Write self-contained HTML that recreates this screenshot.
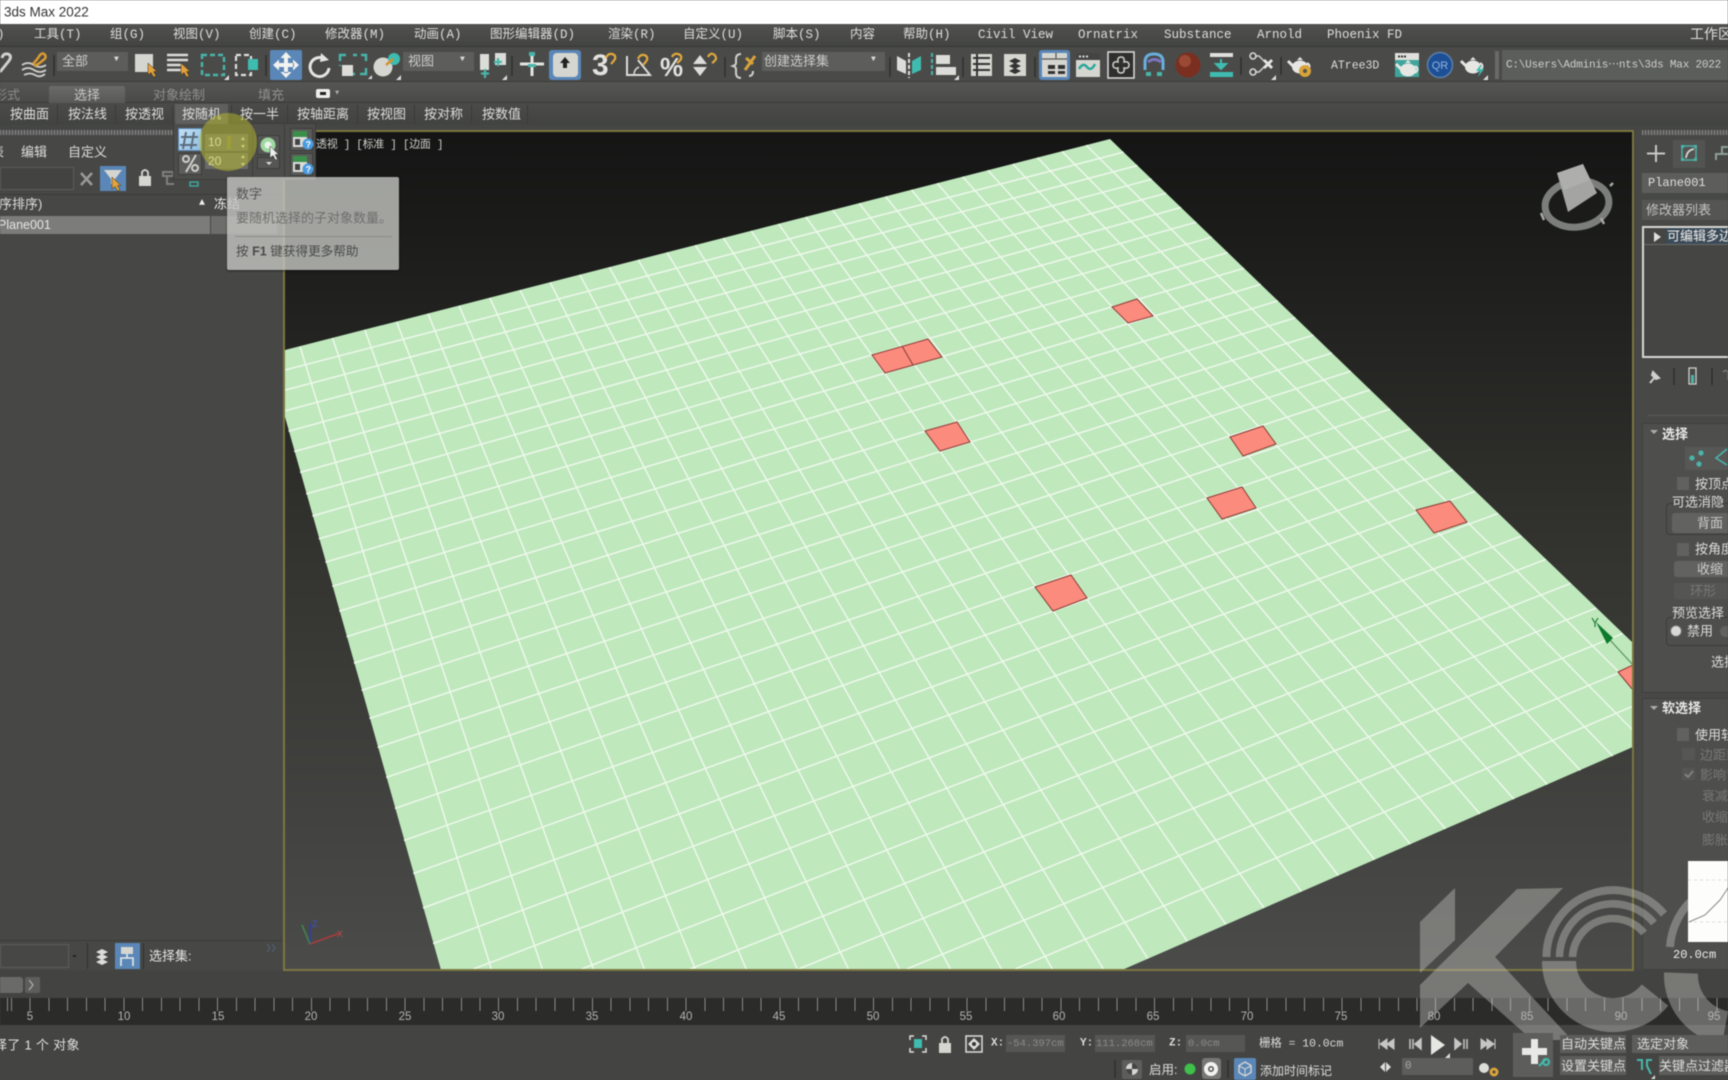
<!DOCTYPE html>
<html lang="zh-CN"><head><meta charset="utf-8"><title>3ds Max 2022</title>
<style>
*{box-sizing:border-box;margin:0;padding:0}
html,body{width:1728px;height:1080px;overflow:hidden;background:#454644}
#root{position:relative;width:1728px;height:1080px;overflow:hidden;filter:blur(.55px);font-family:"Liberation Mono","Noto Sans CJK SC",monospace;font-size:12.5px;color:#ddd}
.b{position:absolute}
.t{position:absolute;white-space:nowrap;transform:translateY(-50%);line-height:1}
.c{font-family:"Liberation Sans","Noto Sans CJK SC",sans-serif;font-size:13px}
.d{color:#777}
.dd{position:absolute;background:#5d5e5b}
.tick{position:absolute;white-space:nowrap;top:1017px;transform:translate(-50%,-50%);font:11.5px "Liberation Sans",sans-serif;color:#b4b5b1}
svg{position:absolute;left:0;top:0;overflow:hidden}
</style></head><body><div id="root">

<!-- chrome backgrounds -->
<div class="b" style="left:0;top:0;width:1728px;height:24px;background:#fff"></div>
<div class="b" style="left:0;top:24px;width:1728px;height:23px;background:linear-gradient(#515250,#434442);border-bottom:1px solid #383937"></div>
<div class="b" style="left:0;top:47px;width:1728px;height:35px;background:#4a4b49;border-bottom:1px solid #3b3c3a"></div>
<div class="b" style="left:0;top:82px;width:1728px;height:21px;background:linear-gradient(#555654,#4a4b49);border-bottom:1px solid #3b3c3a"></div>
<div class="b" style="left:0;top:103px;width:1728px;height:22px;background:linear-gradient(#4b4c4a,#424341)"></div>
<div class="b" style="left:0;top:125px;width:1728px;height:5px;background:#454644"></div>
<!-- left panel -->
<div class="b" style="left:0;top:130px;width:283px;height:840px;background:#474846"></div>
<div class="b" style="left:0;top:130px;width:173px;height:5px;background:repeating-linear-gradient(90deg,#888 0 1px,#555 1px 3px)"></div>
<div class="b" style="left:0;top:167px;width:74px;height:23px;border:1px solid #5b5c5a;background:#434442"></div>
<div class="b" style="left:100px;top:166px;width:26px;height:25px;background:#5a87b8"></div>
<div class="b" style="left:0;top:194px;width:283px;height:1px;background:#3a3b39"></div>
<div class="b" style="left:0;top:216px;width:210px;height:18px;background:#7c7d7a"></div>
<div class="b" style="left:211px;top:216px;width:66px;height:18px;background:#6d6e6b"></div>
<div class="b" style="left:0;top:940px;width:283px;height:1px;background:#3a3b39"></div>
<div class="b" style="left:0;top:944px;width:69px;height:24px;border:1px solid #5b5c5a"></div>
<div class="b" style="left:115px;top:943px;width:25px;height:26px;background:#5a87b8"></div>
<div class="b" style="left:87px;top:943px;width:1px;height:26px;background:#2f302e"></div>
<div class="b" style="left:143px;top:943px;width:1px;height:26px;background:#2f302e"></div>
<!-- bottom -->
<div class="b" style="left:0;top:970px;width:1728px;height:28px;background:#434442"></div>
<div class="b" style="left:0;top:977px;width:23px;height:16px;background:#6a6b68;border-radius:0 3px 3px 0"></div>
<div class="b" style="left:25px;top:977px;width:15px;height:16px;background:#5d5e5b;border-radius:2px"></div>
<div class="b" style="left:0;top:998px;width:1728px;height:27px;background:#2b2c2a"></div>
<div class="b" style="left:0;top:998px;width:1728px;height:13px;background:repeating-linear-gradient(90deg,#8a8b88 0 1px,transparent 1px 18.74px);background-position:11px 0"></div>
<div class="b" style="left:0;top:1025px;width:1728px;height:55px;background:#444543"></div>
<!-- right panel -->
<div class="b" style="left:1636px;top:130px;width:92px;height:840px;background:#484947"></div>
<div class="b" style="left:1642px;top:130px;width:86px;height:5px;background:repeating-linear-gradient(90deg,#888 0 1px,#555 1px 3px)"></div>
<div class="b" style="left:1673px;top:140px;width:32px;height:28px;background:#535452"></div>
<div class="dd" style="left:1642px;top:173px;width:86px;height:20px"></div>
<div class="dd" style="left:1642px;top:200px;width:86px;height:20px;background:#555654"></div>
<div class="b" style="left:1642px;top:226px;width:86px;height:132px;border:2px solid #d8d8d4;border-right:0;background:#454644"></div>
<div class="b" style="left:1644px;top:244px;width:84px;height:1px;background:#6a6b68"></div>
<div class="b" style="left:1666px;top:228px;width:62px;height:16px;background:#3b4a58"></div>
<div class="b" style="left:1648px;top:415px;width:80px;height:1px;background:#5b5c5a"></div>
<div class="b" style="left:1642px;top:423px;width:86px;height:270px;background:#4e4f4d;border:1px solid #3f403e;border-right:0"></div>
<div class="b" style="left:1685px;top:447px;width:43px;height:23px;background:#575856"></div>
<div class="b" style="left:1677px;top:477px;width:12px;height:13px;background:#616260"></div>
<div class="b" style="left:1666px;top:503px;width:62px;height:32px;border:1px solid #3c3d3b;border-right:0;border-radius:4px 0 0 4px"></div>
<div class="b" style="left:1672px;top:513px;width:56px;height:20px;background:#626361;border-radius:3px 0 0 3px"></div>
<div class="b" style="left:1677px;top:543px;width:12px;height:13px;background:#616260"></div>
<div class="b" style="left:1674px;top:561px;width:54px;height:16px;background:#626361;border-radius:3px 0 0 3px"></div>
<div class="b" style="left:1674px;top:583px;width:54px;height:16px;background:#555654;border-radius:3px 0 0 3px"></div>
<div class="b" style="left:1666px;top:617px;width:62px;height:29px;border:1px solid #3c3d3b;border-right:0;border-radius:4px 0 0 4px"></div>
<div class="b" style="left:1720px;top:626px;width:8px;height:11px;background:#626361;border-radius:6px 0 0 6px"></div>
<div class="b" style="left:1642px;top:698px;width:86px;height:272px;background:#4e4f4d;border:1px solid #3f403e;border-right:0"></div>
<div class="b" style="left:1677px;top:728px;width:12px;height:13px;background:#616260"></div>
<div class="b" style="left:1682px;top:748px;width:13px;height:12px;background:#565755"></div>
<div class="b" style="left:1682px;top:768px;width:13px;height:12px;background:#565755"></div>

<!-- viewport -->
<svg width="1728" height="1080" viewBox="0 0 1728 1080">
<defs><linearGradient id="vg" x1="0" y1="0" x2="0" y2="1"><stop offset="0" stop-color="#141514"/><stop offset=".5" stop-color="#33342f"/><stop offset="1" stop-color="#4b4c4a"/></linearGradient>
<clipPath id="vc"><rect x="285" y="132" width="1347" height="837"/></clipPath></defs>
<rect x="284" y="131" width="1349" height="839" fill="url(#vg)" stroke="#7d7640" stroke-width="2"/>
<g clip-path="url(#vc)">
<polygon points="1110,139 1633,643 1633,747 1122,970 441,970 285,417 285,350" fill="#bfe8bd"/>
<g id="grid" stroke="#eef8ec" stroke-width="1.5" fill="none"></g>
<g fill="#fa8b7d" stroke="#8a3a32" stroke-width="1">
<polygon points="872,355 928,339 942,357 885,373"/><line x1="902" y1="346" x2="913" y2="365"/>
<polygon points="1112,307 1137,299 1153,316 1128,323"/>
<polygon points="925,431 957,422 970,442 940,451"/>
<polygon points="1230,437 1263,426 1276,444 1243,456"/>
<polygon points="1207,498 1242,487 1256,508 1222,519"/>
<polygon points="1416,510 1450,501 1467,522 1434,533"/>
<polygon points="1035,587 1071,575 1087,598 1053,611"/>
<polygon points="1618,672 1633,665 1640,680 1633,690"/>
</g>
<!-- gizmo -->
<line x1="1610" y1="640" x2="1633" y2="665" stroke="#4c8a50" stroke-width="1"/>
<polygon points="1596,622 1613,638 1607,644" fill="#0d7a2c"/>
<path d="M1592 618l3 5 3-5M1595 623v4" stroke="#1c7a34" fill="none" stroke-width="1.2"/>
<!-- axis tripod -->
<path d="M310 944V923" stroke="#2c3fae" stroke-width="1.5"/><path d="M310 944L340 933" stroke="#a83c3c" stroke-width="1.5"/><path d="M310 944L302 925" stroke="#3f8a4a" stroke-width="1.5"/>
<text x="312" y="927" font-size="9" fill="#3b50c8" font-family="Liberation Sans">Z</text><text x="337" y="937" font-size="9" fill="#b84848" font-family="Liberation Sans">X</text>
<!-- viewcube -->
<ellipse cx="1577" cy="204" rx="32" ry="23" fill="#1c1d1b" fill-opacity=".6" stroke="#7c7e7b" stroke-width="7" transform="rotate(-8 1577 204)"/>
<path d="M1541 213l3 7M1601 218l3 6M1610 186l3-3" stroke="#a8a9a6" stroke-width="2.5" fill="none"/>
<polygon points="1557,173 1583,164 1597,193 1568,212" fill="#a4a5a2"/><polygon points="1557,173 1583,164 1590,180 1564,190" fill="#aeafac"/>
</g>
</svg>

<!-- toolbar icons -->
<svg width="1728" height="1080" viewBox="0 0 1728 1080">
<defs>
<path id="cur" d="M0 0V12L3 9.5 5.5 14 8 13 5.5 8.5H9Z" fill="#e3a23c" stroke="#3a2a10" stroke-width=".5"/>
<g id="pot"><ellipse cx="12" cy="13" rx="8" ry="6.5" fill="#e6e6e2"/><path d="M5 12L0 7" stroke="#e6e6e2" stroke-width="3"/><path d="M9 6h6l-3-3z" fill="#e6e6e2"/><path d="M19 9q5 3 0 7" stroke="#e6e6e2" stroke-width="2" fill="none"/></g>
</defs>
<g fill="none">
<path d="M0 72L8 62Q13 56 8 54Q3 53 2 58" stroke="#cfcfcb" stroke-width="3"/>
<path d="M22 65q6-4 12 0t12 0M22 70q6-4 12 0t12 0M24 75q6-3 11 0t10-1" stroke="#cfcfcb" stroke-width="1.8"/>
<path d="M33 64q4-4 7-9q3-3 5 0t-3 6q-3 3-8 5" stroke="#dd9b30" stroke-width="2.5"/>
<path d="M54 55V76" stroke="#2f302e" stroke-width="1.5"/>
<rect x="135" y="54" width="18" height="18" fill="#d6d6d1"/>
<use href="#cur" x="148" y="63"/>
<path d="M167 55h21M167 60h21M167 65h15M167 70h15" stroke="#dcdcd8" stroke-width="2.6"/>
<use href="#cur" x="181" y="63"/>
<rect x="202" y="55" width="22" height="20" stroke="#49b5aa" stroke-width="2.4" stroke-dasharray="5 3"/>
<path d="M224 80h5v-5z" fill="#ddd"/>
<rect x="236" y="55" width="15" height="20" stroke="#e0e0dc" stroke-width="2.2" stroke-dasharray="5 3"/>
<rect x="248" y="59" width="10" height="11" fill="#3fbcb0"/>
<path d="M266 55V76" stroke="#2f302e" stroke-width="1.5"/>
<rect x="270" y="50" width="32" height="30" rx="2" fill="#5a87b8"/>
<path d="M278 63h16v4h-16zM284 57h4v16h-4zM286 52l5.5 6h-11zM286 78l5.5-6h-11zM273 65l6-5.5v11zM299 65l-6-5.5v11z" fill="#f2f2ee"/>
<path d="M326 60a9.5 9.5 0 1 0 3 8" stroke="#e4e4e0" stroke-width="3"/><path d="M321 53l8 7-9 2z" fill="#e4e4e0"/>
<path d="M340 61v-6h6M361 55h5v6M366 68v6h-6M353 55h4M340 65v1M355 74h-2" stroke="#49b5aa" stroke-width="2.4"/>
<rect x="342" y="65" width="11" height="11" fill="#dcdcd8"/>
<circle cx="383" cy="67" r="9.5" fill="#d6d6d1"/><circle cx="394" cy="59" r="6" fill="#3fbcb0"/><path d="M386 65l7-6" stroke="#d9902c" stroke-width="2.5"/>
<path d="M368 79h4v-4zM396 80h5v-5z" fill="#ddd"/>
<rect x="480" y="54" width="9" height="16" fill="#dcdcd8"/><rect x="495" y="53" width="11" height="12" fill="#dcdcd8"/>
<path d="M485 69v9M481 73.5h8M498 58v8M494 62h8" stroke="#49b5aa" stroke-width="2.2"/><path d="M502 80h5v-5z" fill="#ddd"/>
<path d="M512 56V76" stroke="#2f302e" stroke-width="1.5"/>
<path d="M532 53V76M520 64h24" stroke="#e4e4e0" stroke-width="3"/><rect x="529" y="52" width="6" height="4" fill="#49b5aa"/><path d="M528 64h8v3h-8z" fill="#49b5aa"/>
<rect x="549" y="50" width="32" height="30" rx="3" fill="#5a87b8"/><rect x="553" y="53" width="25" height="24" rx="4" fill="#d6d6d1"/><path d="M565 57l-5 6h3v5h4v-5h3z" fill="#222"/>
</g>
<g font-family="Liberation Sans" font-weight="bold">
<text x="592" y="75" font-size="30" fill="#e2e2de">3</text>
<text x="660" y="76" font-size="26" fill="#e2e2de">%</text>
</g>
<g fill="none">
<path d="M606 58q2-5 6-4t3 5q-2 3-4 5" stroke="#e0a83c" stroke-width="2.2"/>
<path d="M627 56V75H650L638 60" stroke="#dcdcd8" stroke-width="2"/><path d="M634 75q0-6 5-8" stroke="#dcdcd8" stroke-width="1.5"/><path d="M638 59q2-5 6-4t3 5q-2 3-4 5" stroke="#e0a83c" stroke-width="2.2"/>
<path d="M672 57q2-4 6-3t3 5q-2 3-4 4" stroke="#e0a83c" stroke-width="2.2"/>
<path d="M693 64h14l-7-9zM693 67h14l-7 9z" fill="#dcdcd8"/><path d="M708 57q2-4 5-3t3 5q-2 3-4 4" stroke="#e0a83c" stroke-width="2.2"/>
<path d="M725 57V77" stroke="#2f302e" stroke-width="1.5"/>
<path d="M741 54q-5 0-5 5v4q0 2-3 3q3 1 3 3v4q0 5 5 5M749 76q4 0 4-5" stroke="#cfcfcb" stroke-width="2"/><path d="M745 70L755 56M746 58l7 6" stroke="#d9a33a" stroke-width="3"/>
<path d="M890 57V77" stroke="#2f302e" stroke-width="1.5"/>
<path d="M897 56l9 5V74l-9-4z" fill="#dcdcd8"/><path d="M921 56l-9 5V74l9-4z" fill="#3fbcb0"/><path d="M909 53V78" stroke="#e0e0dc" stroke-width="2" stroke-dasharray="4 2"/>
<path d="M932 53V77" stroke="#49b5aa" stroke-width="2" stroke-dasharray="4 2"/><rect x="936" y="55" width="14" height="9" fill="#dcdcd8"/><rect x="936" y="67" width="20" height="8" fill="#dcdcd8"/><path d="M954 80h5v-5z" fill="#ddd"/>
<path d="M963 57V77M1035 57V77M1241 57V75M1281 57V75" stroke="#2f302e" stroke-width="1.5"/>
<rect x="971" y="54" width="21" height="22" fill="#d6d6d1"/><path d="M973 58h17M973 64h17M973 70h17M977 54v22" stroke="#333" stroke-width="2"/>
<rect x="1004" y="54" width="22" height="22" fill="#d6d6d1"/><path d="M1009 61l6-3 6 3-6 3zM1009 66l6-3 6 3-6 3zM1009 71l6-3 6 3-6 3z" fill="#333"/>
<rect x="1039" y="50" width="31" height="30" rx="3" fill="#5a87b8"/><rect x="1042" y="53" width="25" height="24" fill="#d6d6d1"/><path d="M1042 59h14V53M1056 59h11" stroke="#555" stroke-width="1.2"/><path d="M1048 65h7v4h-7zM1058 65h7v4h-7zM1048 71h7v3h-7zM1058 71h7v3h-7z" fill="#333"/>
<rect x="1076" y="53" width="24" height="24" fill="#d6d6d1"/><rect x="1076" y="53" width="24" height="7" fill="#444"/><path d="M1079 56.5h10" stroke="#ddd" stroke-width="2" stroke-dasharray="2 1.5"/><path d="M1079 69q4-7 8-2t8-3" stroke="#2aa79a" stroke-width="2.5"/>
<rect x="1108" y="52" width="26" height="26" fill="#2f302e" stroke="#ddd" stroke-width="1.5"/><path d="M1121 57q4 0 3 5q5-1 5 3t-5 3q1 5-3 5t-3-5q-5 1-5-3t5-3q-1-5 3-5z" stroke="#cfcfcb" stroke-width="1.5"/>
<path d="M1145 70V62q0-8 9-8t9 8v8" stroke="#68aedb" stroke-width="3"/><path d="M1148 62q6-5 13 0" stroke="#7c74c4" stroke-width="3"/><path d="M1146 72h5v4h-5zM1157 72h5v4h-5z" fill="#49b5aa"/>
<circle cx="1188" cy="65" r="12.5" fill="#7a2f20"/><circle cx="1185" cy="61" r="6" fill="#9a4a34"/>
<rect x="1210" y="53" width="23" height="4" fill="#e0e0dc"/><rect x="1210" y="72" width="23" height="5" fill="#3fbcb0"/><path d="M1221 59v6M1216 64h10l-5 5z" fill="#3fbcb0" stroke="#3fbcb0" stroke-width="2"/>
<path d="M1255 56h4l5 5M1255 72h4l5-5" stroke="#cfcfcb" stroke-width="1.5"/><circle cx="1253" cy="56" r="3" stroke="#ddd" stroke-width="1.5"/><circle cx="1253" cy="72" r="3" stroke="#ddd" stroke-width="1.5"/><path d="M1264 60l8 8M1272 60l-8 8" stroke="#e4e4e0" stroke-width="3"/><path d="M1271 80h5v-5z" fill="#ddd"/>
<use href="#pot" x="1288" y="54"/><circle cx="1305" cy="71" r="6" fill="#d9a33a"/><circle cx="1305" cy="71" r="2" fill="#554"/>
<rect x="1395" y="53" width="24" height="24" fill="#3fa59c"/><rect x="1395" y="53" width="24" height="7" fill="#e0e0dc"/><path d="M1398 56.5h8" stroke="#333" stroke-width="2" stroke-dasharray="2 1"/><use href="#pot" x="1396" y="57"/>
<circle cx="1440" cy="65" r="12.5" fill="#1d4f97" stroke="#5b7fa8" stroke-width="1.5"/>
<use href="#pot" x="1461" y="54"/><path d="M1481 64l-5 7h4l-2 6 6-8h-4z" fill="#3fbcb0"/><path d="M1483 80h5v-5z" fill="#ddd"/>
<rect x="1495" y="51" width="4" height="28" fill="#6a6b68"/>
</g>
<text x="1440" y="69" font-size="11" text-anchor="middle" fill="#8fb4dd" font-family="Liberation Sans">QR</text>
<!-- scene explorer icons -->
<g fill="none">
<path d="M81 173l11 12M92 173l-11 12" stroke="#9a9b98" stroke-width="2.5"/>
<path d="M104 170h18l-7 9v7l-4-2v-5z" fill="#d6d6d1"/><use href="#cur" x="112" y="177"/>
<rect x="139" y="176" width="12" height="10" fill="#d6d6d1"/><path d="M142 176v-4q3-4 6 0v4" stroke="#d6d6d1" stroke-width="1.8"/>
<path d="M163 172h10v4h-10zM167 176v8h7" stroke="#7f807c" stroke-width="2"/>
<path d="M190 182h8v4h-8z" stroke="#3fa59c" stroke-width="1.5"/>
<path d="M73 956l3 0" stroke="#222" stroke-width="2"/>
<path d="M96 952l6-3 6 3-6 3zM96 957l6-3 6 3-6 3zM96 962l6-3 6 3-6 3z" fill="#dcdcd8"/>
<rect x="121" y="947" width="12" height="7" fill="#d6d6d1"/><path d="M127 954v4M121 966v-8h12v8" stroke="#e8e8e4" stroke-width="1.6"/>
<path d="M267 944l3 4-3 4M272 944l3 4-3 4" stroke="#4f5c6e" stroke-width="1.4"/>
<path d="M29 980l4 5-4 5" stroke="#a8a9a6" stroke-width="1.4"/>
<!-- status icons -->
<path d="M910 1040v-4h4M922 1036h4v4M926 1048v4h-4M914 1052h-4v-4" stroke="#ddd" stroke-width="1.5"/><rect x="914" y="1039" width="8" height="9" fill="#3fbcb0"/>
<rect x="939" y="1043" width="12" height="10" fill="#d6d6d1"/><path d="M942 1043v-4q3-4 6 0v4" stroke="#d6d6d1" stroke-width="1.8"/>
<rect x="966" y="1036" width="16" height="16" stroke="#ddd" stroke-width="1.5"/><path d="M974 1038l6 6-6 6-6-6z" fill="#ddd"/><circle cx="974" cy="1044" r="2" fill="#333"/>
<g opacity=".85">
<path d="M1379 1039v10M1394 1039l-7 5 7 5zM1387 1039l-7 5 7 5z" stroke="#ddd" stroke-width="1" fill="#ddd"/>
<path d="M1421 1039l-6 5 6 5zM1410 1039v10M1413 1039v10" stroke="#ddd" stroke-width="1.5" fill="#ddd"/>
<path d="M1455 1039l6 5-6 5zM1464 1039v10M1467 1039v10" stroke="#ddd" stroke-width="1.5" fill="#ddd"/>
<path d="M1495 1039v10M1481 1039l7 5-7 5zM1487 1039l7 5-7 5z" stroke="#ddd" stroke-width="1" fill="#ddd"/>
</g>
<path d="M1431 1035l14 10-14 10z" fill="#e6e6e2"/><path d="M1445 1058h5v-5z" fill="#ddd"/>
<rect x="1122" y="1060" width="20" height="19" rx="2" fill="#5d5e5b"/><circle cx="1132" cy="1069" r="6" fill="#d6d6d1"/><path d="M1132 1063v6h6a6 6 0 0 0-6-6zM1132 1069h-6a6 6 0 0 0 6 6z" fill="#444"/>
<circle cx="1190" cy="1069" r="5.5" fill="#3ec04a"/>
<rect x="1202" y="1058" width="19" height="21" rx="3" fill="#777875"/><circle cx="1211" cy="1069" r="7" fill="#f2f2ee"/><circle cx="1211" cy="1069" r="3" fill="#555"/><circle cx="1211" cy="1069" r="1.5" fill="#eee"/>
<path d="M1115 1060v18M1228 1060v18" stroke="#2f302e" stroke-width="1.5"/>
<rect x="1234" y="1058" width="22" height="22" rx="2" fill="#5a87b8"/><path d="M1245 1062l6 3.5v7l-6 3.5-6-3.5v-7z" stroke="#d6d6d1" stroke-width="1.4"/><path d="M1239 1066l6 3 6-3M1245 1069v6" stroke="#d6d6d1"/>
<path d="M1380 1067l5-5v10zM1391 1067l-5-5v10z" fill="#ddd"/>
<path d="M1466 1066l2-3 2 3zM1466 1069l2 3 2-3z" fill="#ccc"/>
<path d="M1484 1063a5 5 0 1 1 0 10 5 5 0 1 1 0-10" fill="#dcdcd8"/><circle cx="1494" cy="1072" r="4.5" fill="#d9a33a"/><circle cx="1494" cy="1072" r="1.5" fill="#444"/>
<path d="M1637 1060h5v10M1652 1060h-5v6l4 8" stroke="#49b5aa" stroke-width="2"/><path d="M1651 1079h4v-4z" fill="#ddd"/>
<!-- command panel icons -->
<path d="M1656 145v17M1647 153.5h18" stroke="#c8c9c5" stroke-width="2"/>
<rect x="1682" y="146" width="14" height="14" stroke="#49b5aa" stroke-width="1.4"/><path d="M1686 158q1-8 8-9" stroke="#d6d6d1" stroke-width="1.8"/><path d="M1681 145h3v3h-3zM1694 145h3v3h-3zM1681 158h3v3h-3zM1694 158h3v3h-3z" fill="#49b5aa"/>
<path d="M1716 160v-6h12M1722 154v-7h6" stroke="#8f9f98" stroke-width="2"/>
<path d="M1650 383l5-6M1653 372l6 6-3 1-4-4z" stroke="#cfcfcb" stroke-width="2" fill="#cfcfcb"/>
<path d="M1674 368v17M1712 368v17" stroke="#2f302e" stroke-width="1.5"/>
<rect x="1689" y="368" width="7" height="16" stroke="#cfcfcb" stroke-width="1.3"/><rect x="1691" y="375" width="3" height="8" fill="#49b5aa"/>
<path d="M1723 372q3-3 5 0v8" stroke="#777" stroke-width="1.5"/>
<path d="M1654 232l0 10 7-5z" fill="#e0e0dc"/>
<path d="M1650 430h8l-4 4z" fill="#aaa"/><path d="M1650 706h8l-4 4z" fill="#aaa"/>
<circle cx="1692" cy="458" r="2.6" fill="#49b5aa"/><circle cx="1701" cy="453" r="2.6" fill="#49b5aa"/><circle cx="1699" cy="464" r="2.6" fill="#49b5aa"/>
<path d="M1727 449l-11 9 11 7" stroke="#49b5aa" stroke-width="1.6"/>
<circle cx="1676" cy="631" r="5.5" fill="#d8d8d4" stroke="#6a6b68" stroke-width="1"/>
<path d="M1685 774l3 3 5-6" stroke="#888" stroke-width="1.6"/>
</g>
<!-- watermark -->
<g fill="#c8c9c4" fill-opacity=".4" stroke="none">
<polygon points="1420,922 1455,888 1455,940 1420,973"/>
<polygon points="1517,889 1563,888 1495,957 1572,1040 1532,1040 1468,983 1420,1028 1420,985"/>
</g>
<g fill="none" stroke="#c8c9c4" stroke-opacity=".4">
<path d="M1546.5 957A66.5 66.5 0 0 1 1664 914" stroke-width="8"/>
<path d="M1559.5 957A53.5 53.5 0 0 1 1654 923" stroke-width="7.5"/>
<path d="M1572.5 957A40.5 40.5 0 0 1 1644 933" stroke-width="7.5"/>
<path d="M1559 961A54 54 0 0 0 1655 995" stroke-width="34"/>
<path d="M1690 902A71 71 0 0 0 1670 947" stroke-width="8"/>
<path d="M1681 973A54 54 0 0 0 1725 1028" stroke-width="34"/>
</g>
</svg>

<!-- graph above watermark -->
<div class="b" style="left:1688px;top:861px;width:40px;height:81px;background:#fdfdfb"></div>
<svg width="1728" height="1080" viewBox="0 0 1728 1080"><path d="M1688 880h40M1688 922h40" stroke="#ddd" stroke-dasharray="3 3" fill="none"/><path d="M1689 922L1705 915 1720 900 1728 888" stroke="#888" stroke-width="1" fill="none"/></svg>

<!-- ribbon dropdown panel -->
<div class="b" style="left:173px;top:123px;width:143px;height:57px;background:#4c4d4b;border:1px solid #3c3d3b"></div>
<div class="b" style="left:175px;top:104px;width:53px;height:20px;background:#5f605d"></div>
<div class="b" style="left:178px;top:128px;width:24px;height:23px;background:linear-gradient(135deg,#c3e0f5,#8fbfe3);border:1px solid #5a87b8"></div>
<div class="b" style="left:178px;top:153px;width:24px;height:22px;background:#5d5e5b;border:1px solid #3c3d3b"></div>
<div class="b" style="left:205px;top:134px;width:43px;height:17px;background:#6a6b68"></div>
<div class="b" style="left:205px;top:153px;width:43px;height:16px;background:#6a6b68"></div>
<div class="b" style="left:257px;top:135px;width:23px;height:20px;background:#565755;border:1px solid #3c3d3b"></div>
<div class="b" style="left:257px;top:157px;width:23px;height:12px;background:#565755;border:1px solid #3c3d3b"></div>
<div class="b" style="left:290px;top:128px;width:23px;height:23px;background:#5a5b58;border:1px solid #3c3d3b"></div>
<div class="b" style="left:290px;top:153px;width:23px;height:23px;background:#5a5b58;border:1px solid #3c3d3b"></div>
<div class="b" style="left:284px;top:123px;width:1px;height:57px;background:#3c3d3b"></div>
<div class="b" style="left:252px;top:127px;width:1px;height:50px;background:#3c3d3b"></div>
<svg width="1728" height="1080" viewBox="0 0 1728 1080">
<g fill="none">
<path d="M186 132l-3 17M194 132l-3 17M181 137h17M180 145h17" stroke="#5c6c7d" stroke-width="2"/>
<path d="M186 172l10-17" stroke="#cfcfcb" stroke-width="2"/><circle cx="186" cy="159" r="3" stroke="#cfcfcb" stroke-width="2"/><circle cx="195" cy="168" r="3" stroke="#cfcfcb" stroke-width="2"/>
<path d="M241 140l2-3 2 3zM241 145l2 3 2-3zM241 158l2-3 2 3zM241 163l2 3 2-3z" fill="#e0e0b0"/>
<rect x="227" y="136" width="4" height="13" fill="#808040"/>
<circle cx="268" cy="145" r="7.5" fill="#9fd8a0"/><circle cx="268" cy="145" r="3.5" fill="#e8f4e8"/><path d="M270 146v12l3-2.5 2.5 4.5 2-1-2.5-4.5h3.5z" fill="#eee" stroke="#333" stroke-width=".5"/>
<path d="M266 162h6l-3 3z" fill="#ddd"/>
<rect x="293" y="131" width="14" height="16" fill="#dcdcd8"/><rect x="293" y="131" width="14" height="6" fill="#3a8f4a"/><rect x="295" y="139" width="5" height="6" fill="#444"/><circle cx="308" cy="144" r="5.5" fill="#4a9ce0"/>
<rect x="293" y="156" width="14" height="16" fill="#dcdcd8"/><rect x="293" y="156" width="14" height="6" fill="#3a8f4a"/><rect x="295" y="164" width="5" height="6" fill="#444"/><circle cx="308" cy="169" r="5.5" fill="#4a9ce0"/>
</g>
<text x="305.5" y="147.5" font-size="9" fill="#fff" font-family="Liberation Sans" font-weight="bold">?</text>
<text x="305.5" y="172.5" font-size="9" fill="#fff" font-family="Liberation Sans" font-weight="bold">?</text>
</svg>

<!-- text labels -->
<span class="t" style="left:4px;top:12px;font:13.5px 'Liberation Sans',sans-serif;color:#333">3ds Max 2022</span>
<span class="t" style="left:-3px;top:35px">)</span>
<span class="t" style="left:34px;top:35px">工具(T)</span><span class="t" style="left:110px;top:35px">组(G)</span><span class="t" style="left:173px;top:35px">视图(V)</span><span class="t" style="left:249px;top:35px">创建(C)</span><span class="t" style="left:325px;top:35px">修改器(M)</span><span class="t" style="left:414px;top:35px">动画(A)</span><span class="t" style="left:490px;top:35px">图形编辑器(D)</span><span class="t" style="left:608px;top:35px">渲染(R)</span><span class="t" style="left:683px;top:35px">自定义(U)</span><span class="t" style="left:773px;top:35px">脚本(S)</span><span class="t" style="left:850px;top:35px">内容</span><span class="t" style="left:903px;top:35px">帮助(H)</span><span class="t" style="left:978px;top:35px">Civil View</span><span class="t" style="left:1078px;top:35px">Ornatrix</span><span class="t" style="left:1164px;top:35px">Substance</span><span class="t" style="left:1257px;top:35px">Arnold</span><span class="t" style="left:1327px;top:35px">Phoenix FD</span><span class="t" style="left:1690px;top:36px;font-size:14px">工作区</span>

<div class="dd" style="left:57px;top:52px;width:71px;height:19px"></div><div class="dd" style="left:403px;top:52px;width:71px;height:19px"></div><div class="dd" style="left:762px;top:52px;width:123px;height:19px"></div>
<div class="b" style="left:1502px;top:50px;width:226px;height:30px;background:#5c5e5b"></div>
<span class="t c" style="left:62px;top:61px;color:#ccc">全部</span><span class="t" style="left:114px;top:60px;font-size:8px">▼</span>
<span class="t c" style="left:408px;top:61px;color:#ccc">视图</span><span class="t" style="left:460px;top:60px;font-size:8px">▼</span>
<span class="t c" style="left:764px;top:61px;color:#ccc">创建选择集</span><span class="t" style="left:871px;top:60px;font-size:8px">▼</span>
<span class="t" style="left:1331px;top:66px;font-size:11.5px">ATree3D</span>
<span class="t" style="left:1506px;top:66px;font-size:11px;letter-spacing:-.22px;color:#d0d0cc">C:\Users\Adminis⋯nts\3ds Max 2022</span>

<span class="t c" style="left:-6px;top:95px;color:#8a8b88">形式</span>
<div class="b" style="left:49px;top:86px;width:76px;height:17px;background:linear-gradient(#6a6b68,#585956);border-radius:2px 2px 0 0"></div>
<span class="t c" style="left:74px;top:95px;color:#c8c8c4">选择</span><span class="t c" style="left:153px;top:95px;color:#8f908c">对象绘制</span><span class="t c" style="left:258px;top:95px;color:#8f908c">填充</span>
<div class="b" style="left:316px;top:89px;width:14px;height:9px;background:#eee;border-radius:2px"></div><div class="b" style="left:320px;top:92px;width:6px;height:3px;background:#222"></div><span class="t" style="left:335px;top:94px;font-size:7px;color:#aaa">▼</span>

<span class="t c" style="left:10px;top:114px">按曲面</span><span class="t c" style="left:68px;top:114px">按法线</span><span class="t c" style="left:125px;top:114px">按透视</span><span class="t c" style="left:182px;top:114px">按随机</span><span class="t c" style="left:240px;top:114px">按一半</span><span class="t c" style="left:297px;top:114px">按轴距离</span><span class="t c" style="left:367px;top:114px">按视图</span><span class="t c" style="left:424px;top:114px">按对称</span><span class="t c" style="left:482px;top:114px">按数值</span>
<div class="b" style="left:57px;top:105px;width:1px;height:18px;background:#3a3b39"></div><div class="b" style="left:115px;top:105px;width:1px;height:18px;background:#3a3b39"></div><div class="b" style="left:172px;top:105px;width:1px;height:18px;background:#3a3b39"></div><div class="b" style="left:231px;top:105px;width:1px;height:18px;background:#3a3b39"></div><div class="b" style="left:287px;top:105px;width:1px;height:18px;background:#3a3b39"></div><div class="b" style="left:357px;top:105px;width:1px;height:18px;background:#3a3b39"></div><div class="b" style="left:414px;top:105px;width:1px;height:18px;background:#3a3b39"></div><div class="b" style="left:471px;top:105px;width:1px;height:18px;background:#3a3b39"></div><div class="b" style="left:527px;top:105px;width:1px;height:18px;background:#3a3b39"></div>

<span class="t c" style="left:-9px;top:152px">表</span><span class="t c" style="left:21px;top:152px">编辑</span><span class="t c" style="left:68px;top:152px">自定义</span>
<span class="t c" style="left:-1px;top:204px">序排序)</span><span class="t" style="left:199px;top:204px;font-size:10px;color:#eee">▲</span><span class="t c" style="left:214px;top:204px;color:#eee">冻结</span>
<span class="t" style="left:-2px;top:225px;font:12.5px 'Liberation Sans',sans-serif;color:#e6e6e2">Plane001</span>
<span class="t c" style="left:149px;top:956px;color:#e4e4e0">选择集:</span>

<span class="t" style="left:316px;top:146px;font-size:11px;letter-spacing:-.3px;color:#cfcfcb;z-index:1">透视 ] [标准 ] [边面 ]</span>

<!-- right panel text -->
<span class="t" style="left:1648px;top:183px;color:#e0e0dc;font-size:12px">Plane001</span>
<span class="t c" style="left:1646px;top:210px;color:#c4c4c0">修改器列表</span>
<span class="t c" style="left:1667px;top:236px;color:#f0f0ec">可编辑多边形</span>
<span class="t c" style="left:1662px;top:434px;font-weight:bold;color:#e8e8e4">选择</span>
<span class="t c" style="left:1695px;top:484px">按顶点</span>
<span class="t c" style="left:1672px;top:502px">可选消隐</span>
<span class="t c" style="left:1697px;top:523px;color:#ccc">背面</span>
<span class="t c" style="left:1695px;top:549px">按角度</span>
<span class="t c" style="left:1697px;top:569px;color:#ccc">收缩</span>
<span class="t c d" style="left:1690px;top:591px">环形</span>
<span class="t c" style="left:1672px;top:613px">预览选择</span>
<span class="t c" style="left:1687px;top:631px">禁用</span>
<span class="t c" style="left:1711px;top:662px">选择</span>
<span class="t c" style="left:1662px;top:708px;font-weight:bold;color:#e8e8e4">软选择</span>
<span class="t c" style="left:1695px;top:735px">使用软</span>
<span class="t c d" style="left:1700px;top:755px">边距影响</span>
<span class="t c d" style="left:1700px;top:775px">影响背面</span>
<span class="t c d" style="left:1702px;top:796px">衰减</span>
<span class="t c d" style="left:1702px;top:817px">收缩</span>
<span class="t c d" style="left:1702px;top:840px">膨胀</span>
<span class="t" style="left:1673px;top:955px;font-size:12px;color:#eee">20.0cm</span>

<!-- bottom text -->
<span class="tick" style="left:30px">5</span><span class="tick" style="left:124px">10</span><span class="tick" style="left:218px">15</span><span class="tick" style="left:311px">20</span><span class="tick" style="left:405px">25</span><span class="tick" style="left:498px">30</span><span class="tick" style="left:592px">35</span><span class="tick" style="left:686px">40</span><span class="tick" style="left:779px">45</span><span class="tick" style="left:873px">50</span><span class="tick" style="left:966px">55</span><span class="tick" style="left:1059px">60</span><span class="tick" style="left:1153px">65</span><span class="tick" style="left:1247px">70</span><span class="tick" style="left:1341px">75</span><span class="tick" style="left:1434px">80</span><span class="tick" style="left:1527px">85</span><span class="tick" style="left:1621px">90</span><span class="tick" style="left:1714px">95</span>
<span class="t c" style="left:-6px;top:1045px;color:#e0e0dc;letter-spacing:.3px">择了 1 个 对象</span>
<span class="t" style="left:991px;top:1044px;font-size:11px;font-weight:bold">X:</span><div class="dd" style="left:1006px;top:1035px;width:59px;height:17px;background:#565755"></div><span class="t" style="left:1007px;top:1044px;font-size:10.5px;color:#8a8b88">-54.397cm</span>
<span class="t" style="left:1080px;top:1044px;font-size:11px;font-weight:bold">Y:</span><div class="dd" style="left:1095px;top:1035px;width:60px;height:17px;background:#565755"></div><span class="t" style="left:1096px;top:1044px;font-size:10.5px;color:#8a8b88">111.268cm</span>
<span class="t" style="left:1169px;top:1044px;font-size:11px;font-weight:bold">Z:</span><div class="dd" style="left:1186px;top:1035px;width:59px;height:17px;background:#565755"></div><span class="t" style="left:1188px;top:1044px;font-size:10.5px;color:#8a8b88">0.0cm</span>
<span class="t" style="left:1259px;top:1045px;font-size:11.4px">栅格 = 10.0cm</span>
<span class="t c" style="left:1149px;top:1070px;font-size:12.5px">启用:</span>
<span class="t c" style="left:1260px;top:1071px;font-size:12px">添加时间标记</span>
<div class="dd" style="left:1402px;top:1058px;width:71px;height:17px"></div><span class="t" style="left:1405px;top:1067px;font-size:11px;color:#aaa">0</span>
<div class="dd" style="left:1513px;top:1033px;width:40px;height:44px"></div>
<svg width="1728" height="1080" viewBox="0 0 1728 1080"><path d="M1530 1040h7v9h9v7h-9v9h-7v-9h-9v-7h9z" fill="#e8e8e4" transform="translate(1,-1)"/><path d="M1539 1066l7-7M1546 1059a3 3 0 1 0 .1 0" stroke="#3fbcb0" stroke-width="2" fill="none"/></svg>
<div class="dd" style="left:1560px;top:1035px;width:66px;height:18px"></div><div class="dd" style="left:1632px;top:1035px;width:96px;height:18px"></div><div class="dd" style="left:1560px;top:1056px;width:66px;height:19px"></div><div class="dd" style="left:1659px;top:1056px;width:69px;height:19px"></div>
<span class="t c" style="left:1561px;top:1044px">自动关键点</span><span class="t c" style="left:1637px;top:1044px">选定对象</span><span class="t c" style="left:1561px;top:1066px">设置关键点</span><span class="t c" style="left:1659px;top:1066px">关键点过滤器</span>

<!-- yellow highlight -->
<div class="b" style="left:199px;top:113px;width:58px;height:58px;border-radius:50%;background:rgba(190,192,44,.48)"></div>
<span class="t c" style="left:208px;top:142px;color:#d8da90;font-size:12px">10</span><span class="t c" style="left:208px;top:161px;color:#d8da90;font-size:12px">20</span>

<!-- tooltip -->
<div class="b" style="left:227px;top:177px;width:172px;height:93px;background:rgba(196,198,193,.8);border-radius:2px;box-shadow:0 1px 2px rgba(0,0,0,.5)"></div>
<div class="b" style="left:235px;top:236px;width:157px;height:1px;background:#8a8b88"></div>
<span class="t c" style="left:236px;top:194px;color:#555">数字</span>
<span class="t c" style="left:236px;top:218px;color:#6e6f6c">要随机选择的子对象数量。</span>
<span class="t c" style="left:236px;top:252px;color:#4a4b49;font-size:12.6px">按 <b>F1</b> 键获得更多帮助</span>
</div>
<script>
(function(){
var x0=1110,y0=139,x1=1707,y1=715,x2=515,y2=1234,x3=267,y3=355,N=30;
var dx1=x1-x2,dx2=x3-x2,sx=x0-x1+x2-x3,dy1=y1-y2,dy2=y3-y2,sy=y0-y1+y2-y3,den=dx1*dy2-dx2*dy1;
var g=(sx*dy2-dx2*sy)/den,h=(dx1*sy-sx*dy1)/den;
var a=x1-x0+g*x1,b=x3-x0+h*x3,c=x0,d=y1-y0+g*y1,e=y3-y0+h*y3,f=y0;
function P(u,v){var w=g*u+h*v+1;return [(a*u+b*v+c)/w,(d*u+e*v+f)/w];}
var X0=285,X1=1632,Y0=132,Y1=969;
function seg(A,B){
  var t0=0,t1=1,dx=B[0]-A[0],dy=B[1]-A[1];
  var ps=[-dx,dx,-dy,dy],qs=[A[0]-X0,X1-A[0],A[1]-Y0,Y1-A[1]];
  for(var i=0;i<4;i++){
    if(ps[i]===0){if(qs[i]<0)return '';continue;}
    var r=qs[i]/ps[i];
    if(ps[i]<0){if(r>t0)t0=r;}else{if(r<t1)t1=r;}
  }
  if(t0>=t1)return '';
  return 'M'+(A[0]+t0*dx).toFixed(1)+' '+(A[1]+t0*dy).toFixed(1)+'L'+(A[0]+t1*dx).toFixed(1)+' '+(A[1]+t1*dy).toFixed(1);
}
var s='';
for(var i=1;i<N;i++){var t=i/N;s+=seg(P(t,0),P(t,1))+seg(P(0,t),P(1,t));}
var p=document.createElementNS('http://www.w3.org/2000/svg','path');p.setAttribute('d',s);
document.getElementById('grid').appendChild(p);
})();
</script>
</body></html>
